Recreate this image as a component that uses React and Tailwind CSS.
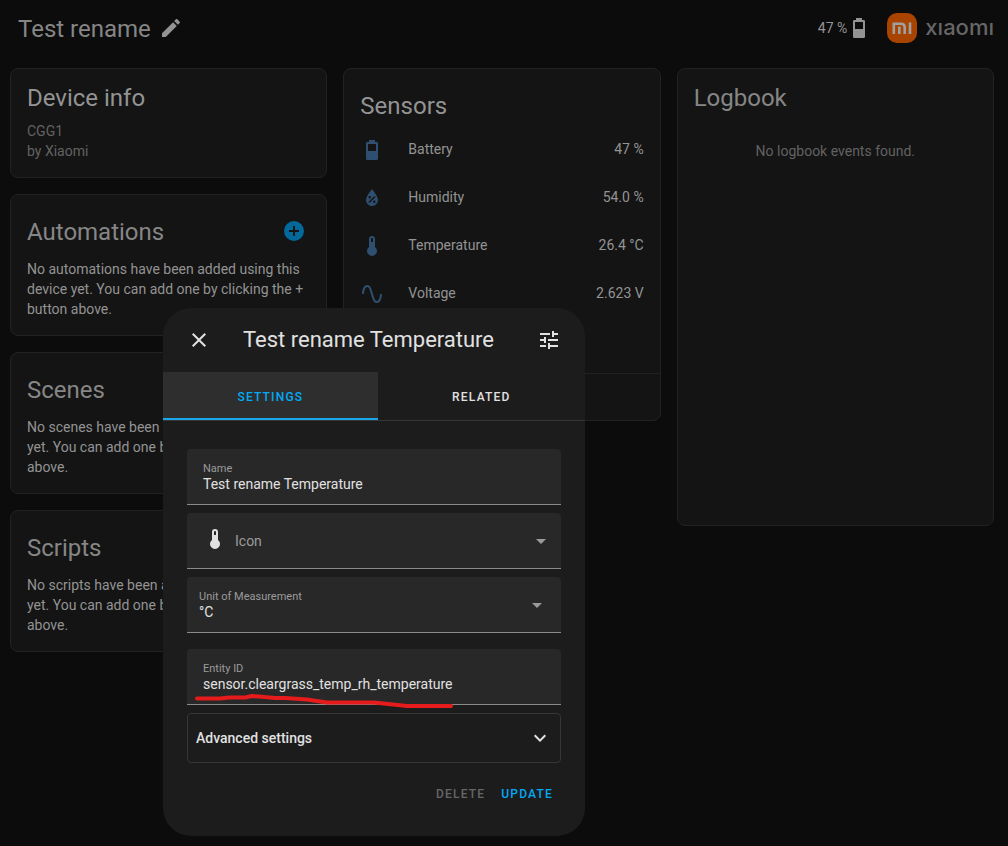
import { useState } from "react";

// Material Design icon paths, 24x24
const ICONS = {
  pencil:
    "M20.71,7.04C21.1,6.65 21.1,6 20.71,5.63L18.37,3.29C18,2.9 17.35,2.9 16.96,3.29L15.12,5.12L18.87,8.87M3,17.25V21H6.75L17.81,9.93L14.06,6.18L3,17.25Z",
  battery:
    "M16,13H8V6H16M16.67,4H15V2H9V4H7.33A1.33,1.33 0 0,0 6,5.33V20.67C6,21.4 6.6,22 7.33,22H16.67A1.33,1.33 0 0,0 18,20.67V5.33C18,4.6 17.4,4 16.67,4Z",
  humidity:
    "M12,3.25C12,3.25 6,10 6,14C6,17.32 8.69,20 12,20A6,6 0 0,0 18,14C18,10 12,3.25 12,3.25M14.47,9.97L15.53,11.03L9.53,17.03L8.47,15.97M9.75,10A1.25,1.25 0 0,1 11,11.25A1.25,1.25 0 0,1 9.75,12.5A1.25,1.25 0 0,1 8.5,11.25A1.25,1.25 0 0,1 9.75,10M14.25,14.5A1.25,1.25 0 0,1 15.5,15.75A1.25,1.25 0 0,1 14.25,17A1.25,1.25 0 0,1 13,15.75A1.25,1.25 0 0,1 14.25,14.5Z",
  thermometer:
    "M15 13V5A3 3 0 0 0 9 5V13A5 5 0 1 0 15 13M12 4A1 1 0 0 1 13 5V8H11V5A1 1 0 0 1 12 4Z",
  sine: "M16.5,21C13.5,21 12.31,16.76 11.05,12.28C10.14,9.04 9,5 7.5,5C4.11,5 4,11.93 4,12H2C2,11.63 2.06,3 7.5,3C10.5,3 11.71,7.25 12.97,11.74C13.83,14.8 15,19 16.5,19C19.94,19 20.03,12.07 20.03,12H22.03C22.03,12.37 21.97,21 16.5,21Z",
  plusCircle:
    "M17,13H13V17H11V13H7V11H11V7H13V11H17M12,2A10,10 0 0,0 2,12A10,10 0 0,0 12,22A10,10 0 0,0 22,12A10,10 0 0,0 12,2Z",
  close:
    "M19,6.41L17.59,5L12,10.59L6.41,5L5,6.41L10.59,12L5,17.59L6.41,19L12,13.41L17.59,19L19,17.59L13.41,12L19,6.41Z",
  tune: "M3,17V19H9V17H3M3,5V7H13V5H3M13,21V19H21V17H13V15H11V21H13M7,9V11H3V13H7V15H9V9H7M21,13V11H11V13H21M15,9H17V7H21V5H17V3H15V9Z",
  menuDown: "M7,10L12,15L17,10H7Z",
  chevronDown:
    "M7.41,8.58L12,13.17L16.59,8.58L18,10L12,16L6,10L7.41,8.58Z",
};

const SENSORS = [
  { icon: "battery", name: "Battery", value: "47 %" },
  { icon: "humidity", name: "Humidity", value: "54.0 %" },
  { icon: "thermometer", name: "Temperature", value: "26.4 °C" },
  { icon: "sine", name: "Voltage", value: "2.623 V" },
];

const Icon = ({ name, className = "" }) => (
  <svg
    viewBox="0 0 24 24"
    className={`size-6 shrink-0 ${className}`}
    fill="currentColor"
    fillRule="evenodd"
    aria-hidden="true"
  >
    <path d={ICONS[name]} />
  </svg>
);

const Card = ({ className = "", children }) => (
  <section className={`rounded-lg border border-[#222222] bg-[#141414] ${className}`}>
    {children}
  </section>
);

const BrandLogo = () => (
  <div className="flex items-center gap-2">
    <svg viewBox="0 0 30 30" className="size-[30px]" aria-hidden="true">
      <rect width="30" height="30" rx="10" fill="#a94400" />
      <g fill="none" stroke="#a0a0a0" strokeWidth="2.6">
        <path d="M6.800 21V10.800H14Q17.700 10.800 17.700 14.200V21" />
        <path d="M12.300 13.600V21" />
        <path d="M23 9.500V21" />
      </g>
    </svg>
    <span className="pb-[2px] font-['Inter'] text-[22px] leading-6 font-medium text-[#666666]">
      xıaomı
    </span>
  </div>
);

const EmptySection = ({ title, text, canAdd }) => (
  <Card className="px-4 pt-4 pb-4">
    <div className="flex h-10 items-center justify-between">
      <h2 className="pt-[2px] text-2xl text-[#868686]">{title}</h2>
      {canAdd && (
        <button className="mr-1 text-[#02699a]" aria-label="Add automation">
          <Icon name="plusCircle" />
        </button>
      )}
    </div>
    <p className="mt-2 text-sm leading-5 text-[#939393]">{text}</p>
  </Card>
);

const TextField = ({ id, label, value, onChange }) => (
  <div className="flex h-14 flex-col rounded-t border-b border-[#8a8a8a] bg-[#282828] px-4 pt-[14px]">
    <label htmlFor={id} className="text-[11px] leading-3 text-[#9b9b9b]">
      {label}
    </label>
    <input
      id={id}
      type="text"
      className="mt-px h-4 w-full bg-transparent text-sm leading-4 text-[#e1e1e1] outline-none"
      value={value}
      onChange={(e) => onChange(e.target.value)}
    />
  </div>
);

// Entity settings dialog, shown on top of the device page
const EntityDialog = () => {
  const [name, setName] = useState("Test rename Temperature");
  const [entityId, setEntityId] = useState("sensor.cleargrass_temp_rh_temperature");
  const [icon, setIcon] = useState("");
  const [unit, setUnit] = useState("°C");

  return (
    <div
      role="dialog"
      aria-labelledby="dialog-title"
      className="absolute top-[308px] left-[163px] w-[422px] overflow-hidden rounded-[28px] bg-[#1c1c1c] text-[#e1e1e1]"
    >
      <header className="flex h-16 items-center px-6">
        <button aria-label="Close">
          <Icon name="close" />
        </button>
        <h2 id="dialog-title" className="ml-8 flex-1 text-[22px] leading-7">
          {name}
        </h2>
        <button aria-label="Entity options">
          <Icon name="tune" />
        </button>
      </header>

      <div role="tablist" className="flex border-b border-[#363636] text-xs font-medium tracking-widest">
        <button
          role="tab"
          aria-selected="true"
          className="h-12 flex-auto border-b-2 border-[#1ba8ea] bg-[#2e2e2e] px-6 pt-1 text-[#03a9f4]"
        >
          SETTINGS
        </button>
        <button role="tab" aria-selected="false" className="h-12 flex-auto px-6 pt-[2px]">
          RELATED
        </button>
      </div>

      <div className="px-6 pt-7">
        <TextField id="name" label="Name" value={name} onChange={setName} />

        <div className="mt-2 flex h-14 items-center rounded-t border-b border-[#8a8a8a] bg-[#282828] pr-2 pl-4">
          <Icon name="thermometer" className="mb-1" />
          <select
            aria-label="Icon"
            className="ml-2 flex-1 appearance-none bg-transparent text-sm text-[#9b9b9b] outline-none"
            value={icon}
            onChange={(e) => setIcon(e.target.value)}
          >
            <option value="">Icon</option>
          </select>
          <Icon name="menuDown" className="text-[#9b9b9b]" />
        </div>

        <div className="mt-2 flex h-14 items-center rounded-t border-b border-[#8a8a8a] bg-[#282828] px-3">
          <div className="flex flex-1 flex-col pt-[2px]">
            <label htmlFor="unit" className="text-[11px] leading-3 text-[#9b9b9b]">
              Unit of Measurement
            </label>
            <select
              id="unit"
              className="mt-px h-4 appearance-none bg-transparent text-sm leading-4 outline-none"
              value={unit}
              onChange={(e) => setUnit(e.target.value)}
            >
              <option>°C</option>
              <option>°F</option>
              <option>K</option>
            </select>
          </div>
          <Icon name="menuDown" className="text-[#9b9b9b]" />
        </div>

        <div className="relative mt-4">
          <TextField id="entity-id" label="Entity ID" value={entityId} onChange={setEntityId} />
          {/* hand drawn red marker line */}
          <svg
            viewBox="0 0 266 20"
            className="pointer-events-none absolute top-10 left-2 h-5 w-[266px]"
            fill="none"
            stroke="#e61b1b"
            strokeWidth="4"
            strokeLinecap="round"
            strokeLinejoin="round"
            aria-hidden="true"
          >
            <path d="M2 9.500H25L34 8.500H50L57 7L64 7.500L80 9H90L112 10.500L132 13.500H179L212 17H256" />
          </svg>
        </div>

        <button className="mt-2 flex h-[50px] w-full items-center justify-between rounded border border-[#363636] px-2 text-sm font-medium">
          Advanced settings
          <Icon name="chevronDown" />
        </button>
      </div>

      <footer className="flex justify-end px-6 pt-[13px] pb-6 text-xs font-medium tracking-widest">
        <button className="h-9 px-2 text-[#666666]">DELETE</button>
        <button className="h-9 px-2 text-[#03a9f4]">UPDATE</button>
      </footer>
    </div>
  );
};

const App = () => {
  return (
    <div className="relative min-h-screen bg-[#0c0c0c] font-['Roboto',sans-serif] text-[#939393]">
      <header className="flex h-14 items-center justify-between pr-[14px] pl-[18px]">
        <div className="flex items-center gap-2">
          <h1 className="pt-[2px] text-2xl text-[#868686]">Test rename</h1>
          <button aria-label="Edit device">
            <Icon name="pencil" />
          </button>
        </div>
        <div className="flex items-center gap-4">
          <div className="flex items-center text-sm">
            47 %
            <Icon name="battery" />
          </div>
          <BrandLogo />
        </div>
      </header>

      <main className="grid grid-cols-3 items-start gap-4 pt-3 pr-[14px] pb-4 pl-[10px]">
        <div className="flex flex-col gap-4">
          <Card className="px-4 pt-[13px] pb-4">
            <h2 className="text-2xl leading-8 text-[#939393]">Device info</h2>
            <p className="mt-[7px] text-sm leading-5 text-[#626262]">
              CGG1
              <br />
              by Xiaomi
            </p>
          </Card>
          <EmptySection
            title="Automations"
            canAdd
            text="No automations have been added using this device yet. You can add one by clicking the + button above."
          />
          <EmptySection
            title="Scenes"
            text="No scenes have been added using this device yet. You can add one by clicking the + button above."
          />
          <EmptySection
            title="Scripts"
            text="No scripts have been added using this device yet. You can add one by clicking the + button above."
          />
        </div>

        <Card>
          <h2 className="px-4 pt-[21px] text-2xl leading-8">Sensors</h2>
          <ul className="mt-[3px] px-4 pb-14 text-sm">
            {SENSORS.map((sensor) => (
              <li key={sensor.name} className="flex h-12 items-center">
                <Icon name={sensor.icon} className="mt-[2px] text-[#2f4f70]" />
                <span className="ml-6 flex-1">{sensor.name}</span>
                <span>{sensor.value}</span>
              </li>
            ))}
          </ul>
          <div className="h-[47px] border-t border-[#222222]" />
        </Card>

        <Card className="min-h-[458px]">
          <h2 className="px-4 pt-[13px] text-2xl leading-8 text-[#868686]">Logbook</h2>
          <p className="mt-[27px] text-center text-sm leading-5 text-[#626262]">
            No logbook events found.
          </p>
        </Card>
      </main>

      <EntityDialog />
    </div>
  );
};

export default App;
